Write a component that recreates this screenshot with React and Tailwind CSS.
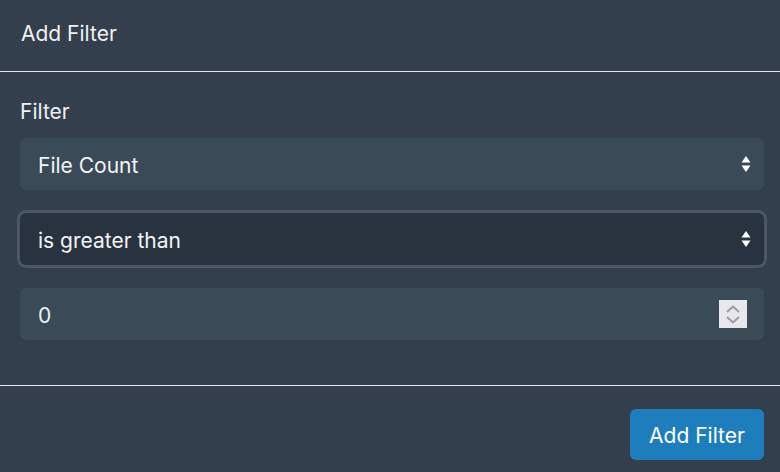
function Arrows() {
  return (
    <svg width="10" height="18" viewBox="0 0 10 18" className="fill-white">
      <path d="M5 1 L9.5 7.5 H0.5 Z" />
      <path d="M0.5 10.5 H9.5 L5 17 Z" />
    </svg>
  );
}

function SelectBox({ label, focused }) {
  return (
    <div
      className={
        "flex h-[52px] items-center justify-between rounded-md pl-[18px] pr-[13px] text-[21px] text-[#f2f4f6] " +
        (focused ? "bg-[#28333f] ring-[3px] ring-[#4a5765]" : "bg-[#3a4b57]")
      }
    >
      <span className="pt-[3px]">{label}</span>
      <Arrows />
    </div>
  );
}

export default function App() {
  return (
    <div className="h-[472px] w-[780px] overflow-hidden bg-[#343f4d] font-['Inter',sans-serif] text-[#eef1f4]">
      <div className="flex h-[71px] items-center px-[21px] pb-[3px] text-[21px]">Add Filter</div>
      <div className="h-px bg-[#e3e6ea]" />

      <div className="pl-5 pr-[16px]">
        <div className="pt-[28px] pb-[14px] text-[21px] leading-[24px]">Filter</div>
        <div className="flex flex-col gap-[23px]">
          <SelectBox label="File Count" />
          <SelectBox label="is greater than" focused />
          <div className="flex h-[52px] items-center justify-between rounded-md bg-[#3a4b57] pl-[18px] pr-[17px] text-[21px]">
            <span className="pt-[3px]">0</span>
            <div className="flex h-[28px] w-[28px] flex-col items-center justify-center gap-[3px] bg-[#e8e7ec]">
              <svg width="14" height="8" viewBox="0 0 14 8" fill="none" stroke="#9b99aa" strokeWidth="2">
                <path d="M1 7 L7 1.5 L13 7" />
              </svg>
              <svg width="14" height="8" viewBox="0 0 14 8" fill="none" stroke="#9b99aa" strokeWidth="2">
                <path d="M1 1 L7 6.5 L13 1" />
              </svg>
            </div>
          </div>
        </div>
      </div>

      <div className="mt-[45px] h-px bg-[#e3e6ea]" />
      <div className="flex justify-end pr-[16px] pt-[23px]">
        <button className="h-[51px] w-[134px] rounded-md bg-[#1e7dbd] pt-[2px] text-[21px] text-white">Add Filter</button>
      </div>
    </div>
  );
}
